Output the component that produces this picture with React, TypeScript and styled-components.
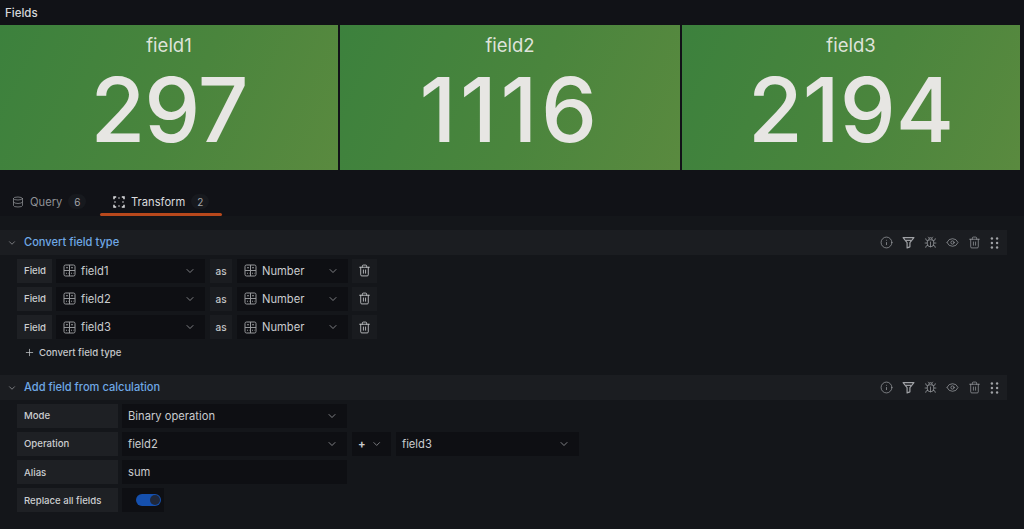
import React from "react";
import styled, { createGlobalStyle } from "styled-components";
import { Bug, ChevronDown, Database, Eye, Info, Plus, Trash2 } from "lucide-react";

const Global = createGlobalStyle`
  html, body { margin: 0; padding: 0; background: #111217; }
  body { font-family: Inter, "Liberation Sans", sans-serif; color: #d4d5d8; -webkit-font-smoothing: antialiased; }
  #root { width: 1024px; height: 529px; overflow: hidden; }
`;

const Page = styled.div`display: flex; flex-direction: column; height: 529px;`;
const PanelTitle = styled.div`height: 25px; padding-left: 5px; font-size: 11.5px; font-weight: 500; line-height: 26px; color: #d6d7da;`;
const Stats = styled.div`display: grid; grid-template-columns: 338px 340px 338px; gap: 2px; height: 145px; padding-right: 4px;`;
const Stat = styled.div`
  display: flex; flex-direction: column; align-items: center;
  background: linear-gradient(115deg, #3c813d 0%, #4a853d 55%, #5a8a3f 100%);
  color: #e8e7e4;
`;
const StatName = styled.div`margin-top: 8px; font-size: 18.5px; line-height: 24px; color: #dfe3da;`;
const StatValue = styled.div<{ $tracking: number }>`
  margin-top: 3px; font-size: 89px; font-weight: 500; line-height: 100px; letter-spacing: ${p => p.$tracking}px; color: #e7e6e3;
`;
const Tabs = styled.div`display: flex; align-items: center; height: 26px; margin-top: 20px; padding-left: 12px; box-sizing: border-box;`;
const Tab = styled.div<{ $active?: boolean; $width: number }>`
  position: relative; display: flex; align-items: center; gap: 6px; width: ${p => p.$width}px; height: 26px; padding-bottom: 3px; box-sizing: border-box;
  font-size: 11.2px; color: ${p => (p.$active ? "#d9dadd" : "#8f9196")};
`;
const TabLine = styled.span`position: absolute; left: -13px; right: 0; bottom: 0; height: 3px; background: #b8481c; border-radius: 2px;`;
const Count = styled.span`
  display: inline-flex; align-items: center; justify-content: center; width: 18px; height: 15px;
  border-radius: 8px; background: #17191e; font-size: 10px; color: #a3a5a9;
`;
const Content = styled.div`flex: 1; background: #14161a; padding-top: 14px;`;
const Section = styled.section`margin-bottom: 14px;`;
const Header = styled.div`
  display: flex; align-items: center; width: 1007px; height: 25px; padding: 0 7px; box-sizing: border-box; background: #1b1d21;
`;
const Title = styled.div`margin: -1px 0 0 7px; font-size: 11.1px; font-weight: 500; color: #6fa8e6;`;
const Actions = styled.div`display: flex; align-items: center; gap: 9px; margin-left: auto; padding-right: 1.5px; color: #a0a2a6;`;
const Rows = styled.div`display: flex; flex-direction: column; gap: 4.3px; padding: 3.5px 0 0 17px;`;
const Row = styled.div`display: flex; align-items: center; height: 24px;`;
const Label = styled.div<{ $width: number }>`
  display: flex; align-items: center; width: ${p => p.$width}px; height: 24px; padding-left: 7px; margin-right: 4px; box-sizing: border-box;
  background: #1e2024; font-size: 9.6px; font-weight: 500; color: #ccced1;
`;
const Select = styled.div<{ $width: number; $gap?: number }>`
  display: flex; align-items: center; gap: 5px; width: ${p => p.$width}px; height: 24px; padding: 0 9px 0 6px; margin-right: ${p => p.$gap ?? 0}px; box-sizing: border-box;
  background: #0e0f13; font-size: 11.2px; color: #c9cbce;
`;
const IconSlot = styled.span`display: flex; margin-left: 1px;`;
const Value = styled.span<{ $strong?: boolean }>`flex: 1; font-weight: ${p => (p.$strong ? 700 : 400)};`;
const Join = styled.div`
  display: flex; align-items: center; justify-content: center; width: 22px; height: 24px; margin: 0 5px; background: #1a1c20; font-size: 10px; font-weight: 500; color: #c5c7ca;
`;
const IconCell = styled.div`
  display: flex; align-items: center; justify-content: center; width: 25px; height: 24px; margin-left: 4px; background: #191b1f; color: #c6c8cb;
`;
const AddButton = styled.div`
  display: flex; align-items: center; gap: 4px; width: max-content; height: 18px; margin: 4px 0 0 24px; font-size: 9.6px; font-weight: 500; color: #c6c8cb;
`;
const SwitchCell = styled.div`display: flex; align-items: center; justify-content: flex-end; width: 42px; height: 24px; padding-right: 3px; box-sizing: border-box; background: #0e0f13;`;
const Track = styled.div`
  position: relative; width: 25px; height: 12px; border-radius: 6px; background: #1550ae;
`;
const Knob = styled.span`position: absolute; right: 1px; top: 1px; width: 10px; height: 10px; border-radius: 50%; background: #20283a;`;

const Chevron = () => <ChevronDown size={12} strokeWidth={1.6} color="#9a9ca0" />;

const FieldIcon = () => (
  <svg width="13" height="13" viewBox="0 0 13 13" fill="none" stroke="#96989b" strokeWidth="1">
    <rect x="1" y="1" width="11" height="11" rx="1.5" />
    <path d="M1 6.5h11M6.5 1v11" />
    <path d="M3 3.8h2M8 3.8h2M3 9.2h1M5 9.2h.5M8 9.2h1M10 9.2h.5" strokeWidth="1.1" />
  </svg>
);

const TransformIcon = () => (
  <svg width="12" height="12" viewBox="0 0 12 12" fill="none" stroke="#dcdde0" strokeWidth="1.5">
    <path d="M1 3.2V1h2.2M8.8 1H11v2.2M11 8.8V11H8.8M3.2 11H1V8.8" />
    <path d="M5.2 2h1.6M5.2 10h1.6M2 5.2v1.6M10 5.2v1.6" strokeWidth="1" />
  </svg>
);

const FunnelIcon = () => (
  <svg width="13" height="13" viewBox="0 0 12 12" fill="none" stroke="#a0a2a6" strokeWidth="1.1" strokeLinejoin="round">
    <path d="M1 1.5h10L7.3 6.2V10L4.7 11V6.2Z" />
    <path d="M3.6 4h4.8" />
  </svg>
);

const DragIcon = () => (
  <svg width="9" height="12" viewBox="0 0 9 12" fill="#a0a2a6">
    {[1.5, 6, 10.5].flatMap(y => [1.9, 7.1].map(x => <circle key={`${x}-${y}`} cx={x} cy={y} r="1.2" />))}
  </svg>
);

const SectionHeader = ({ title }: { title: string }) => (
  <Header>
    <ChevronDown size={10} strokeWidth={1.8} color="#9a9ca0" />
    <Title>{title}</Title>
    <Actions>
      <Info size={13} strokeWidth={1.3} />
      <FunnelIcon />
      <Bug size={13} strokeWidth={1.3} />
      <Eye size={13} strokeWidth={1.3} />
      <Trash2 size={13} strokeWidth={1.3} />
      <DragIcon />
    </Actions>
  </Header>
);

const ConvertRow = ({ field }: { field: string }) => (
  <Row>
    <Label $width={35}>Field</Label>
    <Select $width={149}>
      <IconSlot><FieldIcon /></IconSlot>
      <Value>{field}</Value>
      <Chevron />
    </Select>
    <Join>as</Join>
    <Select $width={111}>
      <IconSlot><FieldIcon /></IconSlot>
      <Value>Number</Value>
      <Chevron />
    </Select>
    <IconCell>
      <Trash2 size={13} strokeWidth={1.6} />
    </IconCell>
  </Row>
);

export default function App() {
  return (
    <Page>
      <Global />
      <PanelTitle>Fields</PanelTitle>
      <Stats>
        <Stat><StatName>field1</StatName><StatValue $tracking={-1}>297</StatValue></Stat>
        <Stat><StatName>field2</StatName><StatValue $tracking={3.5}>1116</StatValue></Stat>
        <Stat><StatName>field3</StatName><StatValue $tracking={0}>2194</StatValue></Stat>
      </Stats>
      <Tabs>
        <Tab $width={101}>
          <Database size={12} strokeWidth={1.5} />
          <span>Query</span>
          <Count>6</Count>
        </Tab>
        <Tab $active $width={109}>
          <TransformIcon />
          <span>Transform</span>
          <Count>2</Count>
          <TabLine />
        </Tab>
      </Tabs>
      <Content>
        <Section>
          <SectionHeader title="Convert field type" />
          <Rows>
            <ConvertRow field="field1" />
            <ConvertRow field="field2" />
            <ConvertRow field="field3" />
          </Rows>
          <AddButton>
            <Plus size={11} strokeWidth={1.6} />
            Convert field type
          </AddButton>
        </Section>
        <Section>
          <SectionHeader title="Add field from calculation" />
          <Rows>
            <Row>
              <Label $width={101}>Mode</Label>
              <Select $width={225}><Value>Binary operation</Value><Chevron /></Select>
            </Row>
            <Row>
              <Label $width={101}>Operation</Label>
              <Select $width={225} $gap={5}><Value>field2</Value><Chevron /></Select>
              <Select $width={39} $gap={5}><Value $strong>+</Value><Chevron /></Select>
              <Select $width={183}><Value>field3</Value><Chevron /></Select>
            </Row>
            <Row>
              <Label $width={101}>Alias</Label>
              <Select $width={225}><Value>sum</Value></Select>
            </Row>
            <Row>
              <Label $width={101}>Replace all fields</Label>
              <SwitchCell><Track><Knob /></Track></SwitchCell>
            </Row>
          </Rows>
        </Section>
      </Content>
    </Page>
  );
}
